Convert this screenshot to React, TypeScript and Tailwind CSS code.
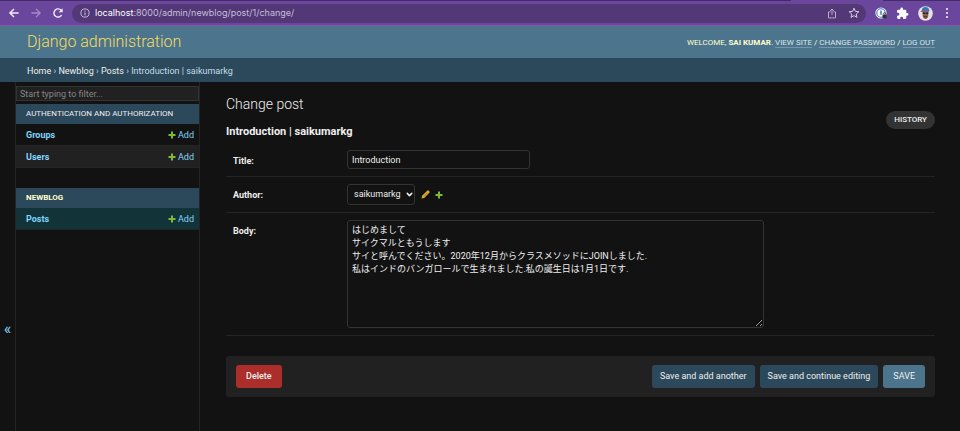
import { ChevronDown } from "lucide-react";
import type { ReactNode } from "react";

const models = [
  {
    app: "Authentication and Authorization",
    current: false,
    items: [
      { name: "Groups", row: "bg-[#121212]" },
      { name: "Users", row: "bg-[#212121]" },
    ],
  },
  {
    app: "Newblog",
    current: true,
    items: [{ name: "Posts", row: "bg-[#123338]" }],
  },
];

const crumbs = ["Home", "Newblog", "Posts"];

const body = `はじめまして
サイクマルともうします
サイと呼んでください。2020年12月からクラスメソッドにJOINしました.
私はインドのバンガロールで生まれました.私の誕生日は1月1日です.`;

function Plus({ className }: { className: string }) {
  return (
    <svg viewBox="0 0 8 8" className={className} aria-hidden="true">
      <path d="M3 .5h2V3h2.5v2H5v2.5H3V5H.5V3H3z" fill="#7fb83a" />
    </svg>
  );
}

function BrowserBar() {
  return (
    <div className="bg-[#6a469d]">
      {/* bottom edge of the tab strip */}
      <div className="flex h-px">
        <div className="grow bg-[#452c68]" />
        <div className="w-[92px] bg-[#6a469d]" />
        <div className="w-[77px] bg-[#452c68]" />
      </div>
      <div className="flex h-[25px] items-center border-b border-[#8257b0] pr-2 pl-2">
        <div className="flex w-16 shrink-0 items-center gap-[10px]">
          <button aria-label="Back">
            <svg viewBox="0 0 12 12" className="size-3" fill="none" stroke="#f3edfa" strokeWidth="1.4">
              <path d="M10.6 6H2.2M6 1.9 1.9 6 6 10.1" />
            </svg>
          </button>
          <button aria-label="Forward">
            <svg viewBox="0 0 12 12" className="size-3" fill="none" stroke="#a58cc6" strokeWidth="1.3">
              <path d="M1.4 6h8.4M6 1.9 10.1 6 6 10.1" />
            </svg>
          </button>
          <button aria-label="Reload">
            <svg viewBox="0 0 12 12" className="size-3" fill="none" stroke="#f3edfa" strokeWidth="1.4">
              <path d="M9.6 8A4.1 4.1 0 1 1 9.2 3.4L10 4.2" />
              <path d="M10.6 1.2v4H6.6z" fill="#f3edfa" stroke="none" />
            </svg>
          </button>
        </div>
        <div className="flex h-[19px] min-w-0 grow items-center rounded-full bg-[#523876] pr-[6px] pl-2">
          <svg viewBox="0 0 10 10" className="mr-[5px] size-[10px] shrink-0" fill="none" stroke="#d3c6e2">
            <circle cx="5" cy="5" r="4.1" strokeWidth=".9" />
            <path d="M5 4.5v2.8M5 2.6v1.1" strokeWidth="1" />
          </svg>
          <div role="textbox" aria-label="Address" className="min-w-0 grow truncate font-['Inter',sans-serif] text-[9px] leading-4 text-[#c9bdd8]">
            <span className="text-white">localhost</span>:8000/admin/newblog/post/1/change/
          </div>
          <button aria-label="Share" className="mr-[11px]">
            <svg viewBox="0 0 10 11" className="h-[11px] w-[10px]" fill="none" stroke="#c4b5d6" strokeWidth=".9">
              <path d="M3.4 3.9H1.5v6h7v-6H6.6M5 7V1.2M3.2 2.8 5 1l1.8 1.8" />
            </svg>
          </button>
          <button aria-label="Bookmark">
            <svg viewBox="0 0 12 12" className="size-3" fill="none" stroke="#d7cbe4" strokeWidth="1">
              <path d="m6 1.2 1.4 3.2 3.5.3-2.7 2.3.8 3.4L6 8.6l-3 1.8.8-3.4-2.7-2.3 3.5-.3z" />
            </svg>
          </button>
        </div>
        <div className="ml-[9px] flex shrink-0 items-center gap-[9px]">
          <svg viewBox="0 0 12 12" className="size-3">
            <circle cx="6" cy="6" r="5.6" fill="#f4f6fb" />
            <circle cx="6" cy="6" r="4.2" fill="#fff" stroke="#3c7fd0" strokeWidth="1.1" />
            <path d="M6 3.6v4.2" stroke="#2b5fa8" strokeWidth="1.3" />
            <path d="M7.5 7.6h4v3.6h-4z" fill="#333" />
            <path d="M8.4 7.6V6.7a1.1 1.1 0 0 1 2.2 0v.9" fill="none" stroke="#333" strokeWidth=".7" />
          </svg>
          <svg viewBox="0 0 24 24" className="size-[13px]" fill="#fff">
            <path d="M20.5 11H19V7a2 2 0 0 0-2-2h-4V3.5a2.5 2.5 0 0 0-5 0V5H4a2 2 0 0 0-2 2v3.8h1.5a2.7 2.7 0 0 1 0 5.4H2V20a2 2 0 0 0 2 2h3.8v-1.5a2.7 2.7 0 0 1 5.4 0V22H17a2 2 0 0 0 2-2v-4h1.5a2.5 2.5 0 0 0 0-5z" />
          </svg>
          <svg viewBox="0 0 16 16" className="size-[15px]">
            <circle cx="8" cy="8" r="7.8" fill="#e6e3e4" />
            <path d="M5 6h6v4.4c0 2-1.4 3.4-3 3.4s-3-1.4-3-3.4z" fill="#8a5a4c" />
            <path d="M3.8 5.7C3.8 2.6 5.6 1.1 8 1.1s4.2 1.5 4.2 4.6z" fill="#2f7ab8" />
            <path d="M2.8 5.3h8.8v1H2.8z" fill="#c04350" />
            <path d="M5 6.9h2.6v1.7H5zM8.4 6.9H11v1.7H8.4z" fill="#29242b" />
            <path d="M6.4 11h3.2v.9H6.4z" fill="#3f2a26" />
          </svg>
          <button aria-label="Menu">
            <svg viewBox="0 0 10 12" className="h-3 w-[10px]" fill="#f3edfa">
              <circle cx="5" cy="2" r="1.1" />
              <circle cx="5" cy="6" r="1.1" />
              <circle cx="5" cy="10" r="1.1" />
            </svg>
          </button>
        </div>
      </div>
    </div>
  );
}

function UserLink({ children }: { children: ReactNode }) {
  return (
    <a href="#" className="border-b border-[#7896a9] text-[#d9e4ea]">
      {children}
    </a>
  );
}

function Sidebar() {
  return (
    <nav className="w-[185px] shrink-0 border-x border-[#242424] pt-1">
      <input
        type="text"
        aria-label="Filter navigation items"
        placeholder="Start typing to filter..."
        className="mb-[3px] block h-[15px] w-full border border-[#333] bg-[#212121] px-[3px] text-[9px] placeholder:text-[#858585]"
      />
      {models.map((m) => (
        <section key={m.app} className="mb-5">
          <h2 className={m.current ? "bg-[#2c495b] px-[10px] text-[8px] leading-5 font-bold text-[#ffffcc] uppercase" : "bg-[#2c495b] px-[10px] text-[8px] leading-5 text-[#eee] uppercase"}>
            <a href="#">{m.app}</a>
          </h2>
          <ul>
            {m.items.map((item) => (
              <li key={item.name} className={`flex h-[22px] items-center justify-between border-b border-[#242424] pr-[5px] pl-[10px] text-[9px] leading-3 text-[#81d4fa] ${item.row}`}>
                <a href="#" className="font-bold">{item.name}</a>
                <a href="#" className="flex items-center gap-[2px]">
                  <Plus className="size-2" />
                  Add
                </a>
              </li>
            ))}
          </ul>
        </section>
      ))}
    </nav>
  );
}

function Field({ id, label, children }: { id: string; label: string; children: ReactNode }) {
  return (
    <div className="flex border-b border-[#242424] py-[7px] pl-[7px]">
      <label htmlFor={id} className="w-[114px] shrink-0 pt-[5px] text-[9px] leading-3 font-bold text-[#eee]">
        {label}
      </label>
      {children}
    </div>
  );
}

export default function App() {
  return (
    <div className="flex min-h-screen flex-col bg-[#121212] font-['Roboto','Noto_Sans_CJK_JP',sans-serif] text-[#eee] scheme-dark">
      <BrowserBar />
      <header className="flex h-8 items-center justify-between bg-[#4c748d] pr-[25px] pl-[27px]">
        <h1 className="text-[16px] font-light text-[#f5dd5d]">
          <a href="#">Django administration</a>
        </h1>
        <div className="text-[8px] leading-[9px] text-[#ffffcc] uppercase">
          Welcome, <strong className="font-bold">Sai Kumar</strong>. <UserLink>View site</UserLink> /{" "}
          <UserLink>Change password</UserLink> / <UserLink>Log out</UserLink>
        </div>
      </header>
      <div className="bg-[#2c495b] px-[27px] pt-[7px] pb-[5px] text-[9px] leading-3 text-[#c4dce8]">
        <p>
          {crumbs.map((c) => (
            <span key={c}>
              <a href="#" className="text-[#eee]">{c}</a> ›{" "}
            </span>
          ))}
          Introduction | saikumarkg
        </p>
      </div>
      <div className="flex grow">
        <div className="flex w-[15px] shrink-0 items-end justify-center pb-24">
          <button aria-label="Toggle navigation" className="text-[16px] leading-3 text-[#81d4fa]">«</button>
        </div>
        <Sidebar />
        <main className="min-w-0 grow pt-[13px] pr-[25px] pb-8 pl-[26px]">
          <h2 className="text-[14px] leading-[18px] font-light">Change post</h2>
          <div className="mt-[9px] flex h-[21px] items-start justify-between">
            <h3 className="pt-[3px] text-[11px] leading-[14px] font-bold">Introduction | saikumarkg</h3>
            <a href="#" className="-mt-[11px] rounded-full bg-[#333] px-2 text-[8px] leading-[18px] font-medium uppercase">
              History
            </a>
          </div>
          <form>
            <Field id="title" label="Title:">
              <input id="title" type="text" defaultValue="Introduction" className="h-[19px] w-[183px] rounded-[3px] border border-[#333] bg-[#121212] px-1 text-[9px]" />
            </Field>
            <Field id="author" label="Author:">
              <div className="relative flex">
                <select id="author" className="h-[21px] w-[68px] appearance-none rounded-[3px] border border-[#333] bg-[#121212] px-[6px] text-[9px]">
                  <option>saikumarkg</option>
                </select>
                <ChevronDown className="pointer-events-none absolute top-[6px] right-[1px] size-[9px]" strokeWidth={4} />
              </div>
              <a href="#" aria-label="Change selected author" className="ml-[6px] self-center">
                <svg viewBox="0 0 9 9" className="size-[9px]">
                  <path d="M.6 8.4 1 5.8 5.9.9a1.5 1.5 0 0 1 2.2 2.2L3.2 8z" fill="#dca92f" />
                  <path d="m2.6 6.4 3.4-3.4" stroke="#8f6b1b" strokeWidth=".5" />
                </svg>
              </a>
              <a href="#" aria-label="Add another author" className="ml-[5px] self-center">
                <Plus className="size-2" />
              </a>
            </Field>
            <Field id="body" label="Body:">
              <textarea id="body" defaultValue={body} className="block h-[108px] w-[417px] rounded-[3px] border border-[#333] bg-[#121212] px-1 py-[3px] text-[9px] leading-[13px]" />
            </Field>
            <div className="mt-5 flex h-[41px] items-center gap-[5px] rounded-[3px] bg-[#212121] px-[10px] text-[9px] leading-[23px]">
              <a href="#" className="mr-auto rounded-[3px] bg-[#ac2e2a] px-[10px] font-medium">Delete</a>
              <button type="button" className="rounded-[3px] bg-[#2c495b] px-2">Save and add another</button>
              <button type="button" className="rounded-[3px] bg-[#2c495b] px-2">Save and continue editing</button>
              <button type="submit" className="rounded-[3px] bg-[#4c748d] px-[10px] uppercase">Save</button>
            </div>
          </form>
        </main>
      </div>
    </div>
  );
}
